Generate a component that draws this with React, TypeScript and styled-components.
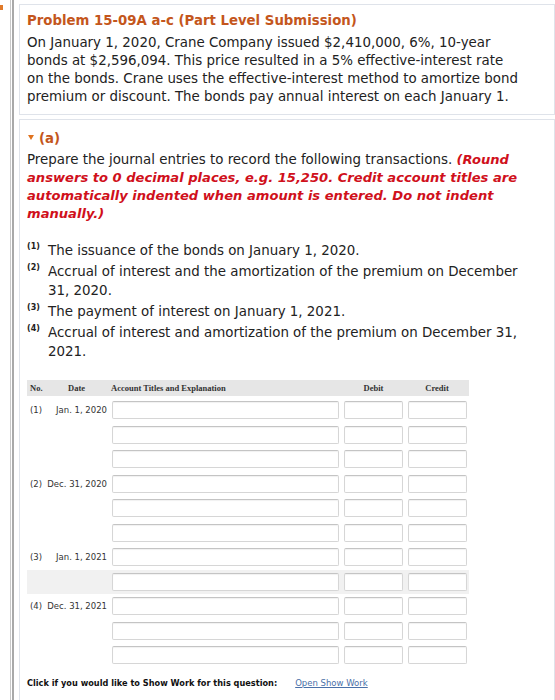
import React from "react";
import { styled, createGlobalStyle } from "styled-components";

const GlobalStyle = createGlobalStyle`
  html, body {
    margin: 0;
    padding: 0;
    background: #ffffff;
  }
  body {
    font-family: "DejaVu Sans", Verdana, sans-serif;
    color: #222;
  }
`;

interface Entry {
  no?: string;
  date?: string;
  shaded?: boolean;
}

const entries: Entry[] = [
  { no: "(1)", date: "Jan. 1, 2020" },
  {},
  {},
  { no: "(2)", date: "Dec. 31, 2020" },
  {},
  {},
  { no: "(3)", date: "Jan. 1, 2021" },
  { shaded: true },
  { no: "(4)", date: "Dec. 31, 2021" },
  {},
  {},
];

const parts = [
  "The issuance of the bonds on January 1, 2020.",
  "Accrual of interest and the amortization of the premium on December 31, 2020.",
  "The payment of interest on January 1, 2021.",
  "Accrual of interest and amortization of the premium on December 31, 2021.",
];

export default function App() {
  return (
    <>
      <GlobalStyle />
      <Page>
        <Gutter>
          <Mark />
          <Rail />
        </Gutter>
        <Column>
          <Panel>
            <Title>Problem 15-09A a-c (Part Level Submission)</Title>
            <Body>
              On January 1, 2020, Crane Company issued $2,410,000, 6%, 10-year
              bonds at $2,596,094. This price resulted in a 5% effective-interest
              rate on the bonds. Crane uses the effective-interest method to
              amortize bond premium or discount. The bonds pay annual interest on
              each January 1.
            </Body>
          </Panel>
          <Panel $open>
            <PartHead>
              <Caret />
              (a)
            </PartHead>
            <Body>
              Prepare the journal entries to record the following transactions.{" "}
              <Warn>
                (Round answers to 0 decimal places, e.g. 15,250. Credit account
                titles are automatically indented when amount is entered. Do not
                indent manually.)
              </Warn>
            </Body>
            <Steps>
              {parts.map((p, i) => (
                <Step key={i}>
                  <StepNo>({i + 1})</StepNo>
                  <span>{p}</span>
                </Step>
              ))}
            </Steps>
            <Journal>
              <HeadRow>
                <HeadCell>No.</HeadCell>
                <HeadCell $pad={16}>Date</HeadCell>
                <HeadCell $pad={1}>Account Titles and Explanation</HeadCell>
                <HeadCell $center>Debit</HeadCell>
                <HeadCell $center>Credit</HeadCell>
              </HeadRow>
              {entries.map((e, i) => (
                <EntryRow key={i} $shaded={e.shaded}>
                  <DateCell>
                    <span>{e.no}</span>
                    <span>{e.date}</span>
                  </DateCell>
                  <Field $wide />
                  <Field />
                  <Field $last />
                </EntryRow>
              ))}
            </Journal>
            <ShowWork>
              Click if you would like to Show Work for this question:
              <WorkLink href="#">Open Show Work</WorkLink>
            </ShowWork>
          </Panel>
        </Column>
      </Page>
    </>
  );
}

const Page = styled.div`
  display: flex;
  width: 555px;
  height: 700px;
  overflow: hidden;
`;

const Gutter = styled.div`
  display: flex;
  width: 19px;
  flex-shrink: 0;
`;

const Mark = styled.div`
  width: 3px;
  height: 5px;
  margin-top: 5px;
  margin-right: 7px;
  background: #e07a2a;
`;

const Rail = styled.div`
  width: 1px;
  height: 100%;
  border-left: 1px solid #c9c9c9;
  border-right: 2px solid #a9a9a9;
`;

const Column = styled.div`
  flex: 1;
  display: flex;
  flex-direction: column;
  gap: 4px;
  padding-top: 4px;
`;

const Panel = styled.div<{ $open?: boolean }>`
  border: 1px solid #dfe3ea;
  padding: ${(p) => (p.$open ? "10px 33px 40px 7px" : "7px 33px 8px 7px")};
  background: #fff;
`;

const Title = styled.div`
  font-size: 13.3px;
  line-height: 18px;
  font-weight: bold;
  color: #c4561c;
  margin-bottom: 4px;
`;

const Body = styled.div`
  font-size: 13.4px;
  line-height: 18px;
  color: #222;
`;

const Warn = styled.span`
  font-size: 13.1px;
  color: #d0101b;
  font-weight: bold;
  font-style: italic;
`;

const PartHead = styled.div`
  display: flex;
  align-items: center;
  gap: 5px;
  font-size: 13.3px;
  line-height: 18px;
  font-weight: bold;
  color: #c4561c;
  margin-bottom: 3px;
`;

const Caret = styled.span`
  width: 0;
  height: 0;
  margin-left: 1px;
  margin-top: -3px;
  border-left: 3.5px solid transparent;
  border-right: 3.5px solid transparent;
  border-top: 5px solid #e0731f;
`;

const Steps = styled.ol`
  list-style: none;
  margin: 18px 0 0;
  padding: 0;
  display: flex;
  flex-direction: column;
  gap: 2px;
`;

const Step = styled.li`
  display: flex;
  font-size: 13.4px;
  line-height: 19px;
  color: #222;
`;

const StepNo = styled.span`
  flex-shrink: 0;
  width: 21px;
  font-size: 8px;
  line-height: 12px;
  font-weight: bold;
`;

const Journal = styled.div`
  margin-top: 19px;
  width: 442px;
`;

const HeadRow = styled.div`
  display: grid;
  grid-template-columns: 25px 58px 232px 63px 64px;
  height: 16px;
  align-items: center;
  background: #e6e6e6;
  margin-bottom: 2px;
`;

const HeadCell = styled.div<{ $pad?: number; $center?: boolean }>`
  font-family: "Liberation Serif", "Times New Roman", serif;
  font-weight: bold;
  font-size: 8.5px;
  color: #333;
  padding-left: ${(p) => (p.$pad ? `${p.$pad}px` : p.$center ? "0" : "3px")};
  text-align: ${(p) => (p.$center ? "center" : "left")};
`;

const EntryRow = styled.div<{ $shaded?: boolean }>`
  display: grid;
  grid-template-columns: 83px 232px 63px 64px;
  height: 24.5px;
  align-items: center;
  background: ${(p) => (p.$shaded ? "#f1f1f1" : "transparent")};
`;

const DateCell = styled.div`
  display: flex;
  justify-content: space-between;
  white-space: nowrap;
  font-size: 8.5px;
  color: #333;
  padding: 0 3px;
`;

const Field = styled.input.attrs({ type: "text" })<{ $wide?: boolean; $last?: boolean }>`
  box-sizing: border-box;
  height: 18px;
  width: ${(p) => (p.$wide ? "227px" : "59px")};
  margin-left: ${(p) => (p.$last ? "3px" : "2px")};
  border: 1px solid #d6d6d6;
  border-top-color: #c4c4c4;
  border-radius: 2px;
  box-shadow: inset 0 1px 1px rgba(0, 0, 0, 0.06);
  background: #fff;
  padding: 0;
  outline: none;
`;

const ShowWork = styled.div`
  margin-top: 10px;
  font-size: 8.2px;
  font-weight: bold;
  color: #111;
  display: flex;
  align-items: baseline;
  gap: 18px;
`;

const WorkLink = styled.a`
  font-size: 8.5px;
  font-weight: normal;
  color: #4a70a8;
  text-decoration: underline;
`;
